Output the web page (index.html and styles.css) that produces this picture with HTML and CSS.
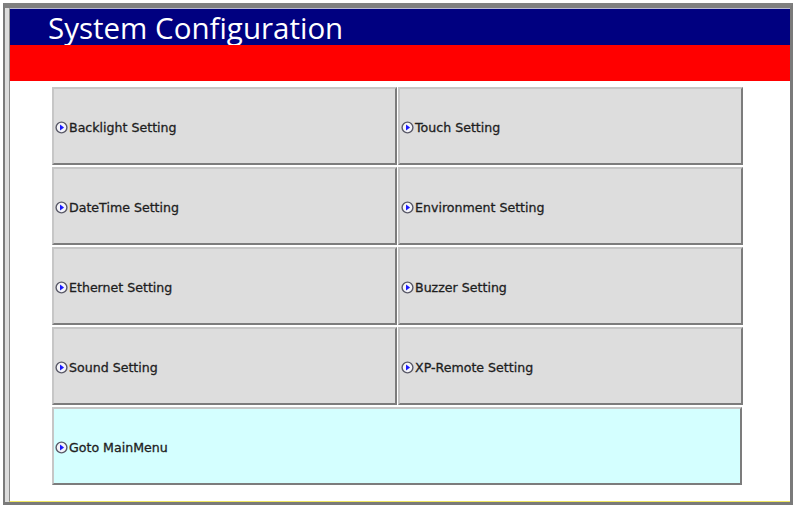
FILE: index.html
```html
<!DOCTYPE html>
<html>
<head>
<meta charset="utf-8">
<link rel="stylesheet" href="styles.css">
</head>
<body>
<div class="window">
  <div class="screen">
    <div class="title-bar"><span class="title">System Configuration</span></div>
    <div class="red-bar"></div>
    <div class="menu">
      <div class="btn"><svg class="ico" viewBox="0 0 12 12"><circle cx="6" cy="6" r="5" fill="#f4f4f8" stroke="#5a5a68" stroke-width="1.3"/><path d="M4.6 3.3 L8.4 6 L4.6 8.7 Z" fill="#1a1aff"/></svg><span>Backlight Setting</span></div>
      <div class="btn"><svg class="ico" viewBox="0 0 12 12"><circle cx="6" cy="6" r="5" fill="#f4f4f8" stroke="#5a5a68" stroke-width="1.3"/><path d="M4.6 3.3 L8.4 6 L4.6 8.7 Z" fill="#1a1aff"/></svg><span>Touch Setting</span></div>
      <div class="btn"><svg class="ico" viewBox="0 0 12 12"><circle cx="6" cy="6" r="5" fill="#f4f4f8" stroke="#5a5a68" stroke-width="1.3"/><path d="M4.6 3.3 L8.4 6 L4.6 8.7 Z" fill="#1a1aff"/></svg><span>DateTime Setting</span></div>
      <div class="btn"><svg class="ico" viewBox="0 0 12 12"><circle cx="6" cy="6" r="5" fill="#f4f4f8" stroke="#5a5a68" stroke-width="1.3"/><path d="M4.6 3.3 L8.4 6 L4.6 8.7 Z" fill="#1a1aff"/></svg><span>Environment Setting</span></div>
      <div class="btn"><svg class="ico" viewBox="0 0 12 12"><circle cx="6" cy="6" r="5" fill="#f4f4f8" stroke="#5a5a68" stroke-width="1.3"/><path d="M4.6 3.3 L8.4 6 L4.6 8.7 Z" fill="#1a1aff"/></svg><span>Ethernet Setting</span></div>
      <div class="btn"><svg class="ico" viewBox="0 0 12 12"><circle cx="6" cy="6" r="5" fill="#f4f4f8" stroke="#5a5a68" stroke-width="1.3"/><path d="M4.6 3.3 L8.4 6 L4.6 8.7 Z" fill="#1a1aff"/></svg><span>Buzzer Setting</span></div>
      <div class="btn"><svg class="ico" viewBox="0 0 12 12"><circle cx="6" cy="6" r="5" fill="#f4f4f8" stroke="#5a5a68" stroke-width="1.3"/><path d="M4.6 3.3 L8.4 6 L4.6 8.7 Z" fill="#1a1aff"/></svg><span>Sound Setting</span></div>
      <div class="btn"><svg class="ico" viewBox="0 0 12 12"><circle cx="6" cy="6" r="5" fill="#f4f4f8" stroke="#5a5a68" stroke-width="1.3"/><path d="M4.6 3.3 L8.4 6 L4.6 8.7 Z" fill="#1a1aff"/></svg><span>XP-Remote Setting</span></div>
      <div class="btn wide"><svg class="ico" viewBox="0 0 12 12"><circle cx="6" cy="6" r="5" fill="#f4f4f8" stroke="#5a5a68" stroke-width="1.3"/><path d="M4.6 3.3 L8.4 6 L4.6 8.7 Z" fill="#1a1aff"/></svg><span>Goto MainMenu</span></div>
    </div>
  </div>
</div>
</body>
</html>
```
FILE: styles.css
```css
html, body {
  margin: 0;
  padding: 0;
  background: #ffffff;
}
.window {
  margin: 3px 0 0 3px;
  width: 790px;
  height: 502px;
  box-sizing: border-box;
  border-top: 5px solid #808080;
  border-left: 2px solid #7a7a7a;
  border-right: 3px solid #7a7a7a;
  border-bottom: 3px solid #7a7a7a;
  background: #dcdcdc;
}
.screen {
  height: 100%;
  box-sizing: border-box;
  margin-left: 4px;
  border-left: 1px solid #8a8a8a;
  border-top: 1px solid #b8b8d0;
  border-bottom: 1px solid #f0e860;
  background: #ffffff;
  display: flex;
  flex-direction: column;
}
.title-bar {
  height: 36px;
  background: #000080;
  display: flex;
  align-items: center;
  padding-left: 38px;
}
.title {
  color: #ffffff;
  font-family: "Open Sans", "DejaVu Sans", sans-serif;
  font-size: 29.5px;
  line-height: 1;
  margin-top: 2px;
}
.red-bar {
  height: 36px;
  background: #ff0000;
}
.menu {
  margin: 6px 0 0 42px;
  width: 690px;
  display: grid;
  grid-template-columns: 345px 345px;
  grid-auto-rows: 78px;
  column-gap: 1px;
  row-gap: 2px;
}
.btn {
  box-sizing: border-box;
  background: #dddddd;
  border-style: solid;
  border-width: 2px;
  border-color: #c6c6c6 #7c7c7c #7c7c7c #c6c6c6;
  display: flex;
  align-items: center;
  padding-left: 1px;
  padding-top: 2px;
  font-family: "DejaVu Sans", sans-serif;
  font-size: 12.6px;
  color: #1e1e1e;
  -webkit-text-stroke: 0.3px #1e1e1e;
}
.btn.wide {
  grid-column: 1 / span 2;
  background: #d4ffff;
  width: 690px;
}
.ico {
  width: 13px;
  height: 13px;
  margin-right: 1px;
  flex: none;
}
```
